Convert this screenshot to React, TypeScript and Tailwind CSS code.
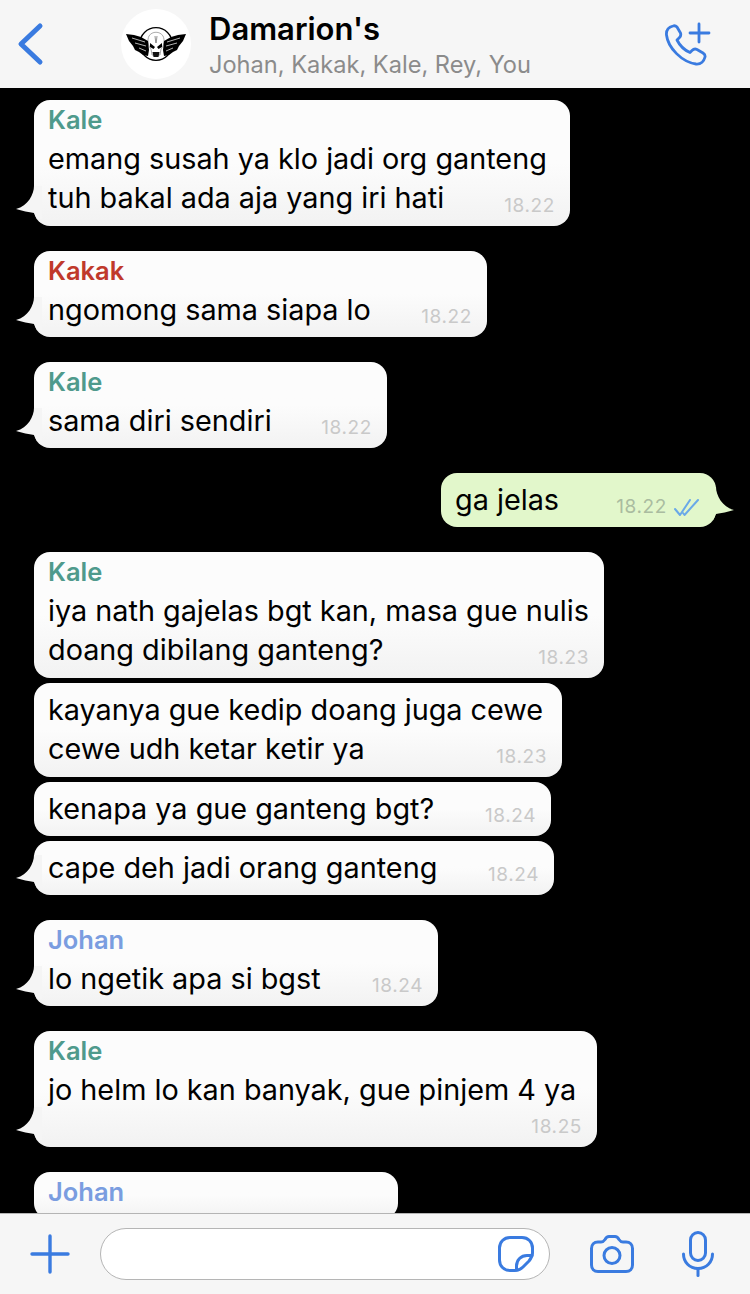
import React from 'react';

const BLUE = '#3a7be0';

type Msg = {
  name?: string;
  color?: string;
  lines: string[];
  time: string;
  width: string;
  tail?: boolean;
  gap: string;
  pad: string;
};

const messages: Msg[] = [
  { name: 'Kale', color: 'text-[#4f9a8c]', lines: ['emang susah ya klo jadi org ganteng', 'tuh bakal ada aja yang iri hati'], time: '18.22', width: 'w-[536px]', tail: true, gap: 'mt-0', pad: 'pb-[9px]' },
  { name: 'Kakak', color: 'text-[#c0392b]', lines: ['ngomong sama siapa lo'], time: '18.22', width: 'w-[453px]', tail: true, gap: 'mt-[25px]', pad: 'pb-[8px]' },
  { name: 'Kale', color: 'text-[#4f9a8c]', lines: ['sama diri sendiri'], time: '18.22', width: 'w-[353px]', tail: true, gap: 'mt-[25px]', pad: 'pb-[8px]' },
];

const messagesAfter: Msg[] = [
  { name: 'Kale', color: 'text-[#4f9a8c]', lines: ['iya nath gajelas bgt kan, masa gue nulis', 'doang dibilang ganteng?'], time: '18.23', width: 'w-[570px]', gap: 'mt-[25px]', pad: 'pb-[9px]' },
  { lines: ['kayanya gue kedip doang juga cewe', 'cewe udh ketar ketir ya'], time: '18.23', width: 'w-[528px]', gap: 'mt-[5px]', pad: 'pb-[9px]' },
  { lines: ['kenapa ya gue ganteng bgt?'], time: '18.24', width: 'w-[517px]', gap: 'mt-[5px]', pad: 'pb-[8px]' },
  { lines: ['cape deh jadi orang ganteng'], time: '18.24', width: 'w-[520px]', tail: true, gap: 'mt-[5px]', pad: 'pb-[8px]' },
  { name: 'Johan', color: 'text-[#7a9de0]', lines: ['lo ngetik apa si bgst'], time: '18.24', width: 'w-[404px]', tail: true, gap: 'mt-[25px]', pad: 'pb-[8px]' },
  { name: 'Kale', color: 'text-[#4f9a8c]', lines: ['jo helm lo kan banyak, gue pinjem 4 ya'], time: '18.25', width: 'w-[563px]', tail: true, gap: 'mt-[25px]', pad: 'pb-[38px]' },
  { name: 'Johan', color: 'text-[#7a9de0]', lines: [''], time: '', width: 'w-[364px]', gap: 'mt-[25px]', pad: 'pb-[8px]' },
];

const Bubble: React.FC<{ msg: Msg }> = ({ msg }) => (
  <div className={`relative ml-[34px] shrink-0 rounded-[16px] bg-gradient-to-b from-[#fcfcfc] from-50% to-[#f2f2f2] px-[14px] pt-[7px] text-black ${msg.width} ${msg.gap} ${msg.pad}`}>
    {msg.tail && (
      <svg className="absolute -left-[18px] bottom-0 h-[40px] w-[26px]" viewBox="0 0 26 40" aria-hidden="true">
        <path d="M18 0 C18 8 12 20 0 23 C6 25 13 26 18 27 C19 29 20 31 21 33 L26 33 L26 0 Z" fill="#f5f5f5" />
      </svg>
    )}
    {msg.name && (
      <div className={`text-[25.5px] font-semibold leading-[26px] ${msg.color}`}>{msg.name}</div>
    )}
    {msg.name && <div className="h-[6px]" />}
    {msg.lines.map((line, i) => (
      <div key={i} className="whitespace-nowrap text-[28.8px] leading-[39px]">{line}</div>
    ))}
    {msg.time && (
      <span className="absolute bottom-[10px] right-[15px] text-[19px] leading-[20px] tracking-[0.6px] text-[#c9c9c9]">{msg.time}</span>
    )}
  </div>
);

const Logo = () => (
  <svg className="h-[36px] w-[60px]" viewBox="0 0 60 36" aria-hidden="true">
    <circle cx="30" cy="18" r="16.300" fill="#fff" stroke="#000" strokeWidth="1.300" />
    {/* skull */}
    <path d="M23 10 C26 5 34 5 37 10 C39 14 38 20 35 23 L34 29 L26 29 L25 23 C22 20 21 14 23 10 Z" fill="#fff" stroke="#888" strokeWidth="0.700" />
    <path d="M24 17 L29 21 L27.500 23 L24 21 Z M36 17 L31 21 L32.500 23 L36 21 Z" fill="#000" />
    <path d="M29 10 L29.800 17 M31 10 L30.200 17" stroke="#777" strokeWidth="0.800" />
    <path d="M26.500 26 L33.500 26 L32.500 31 L27.500 31 Z" fill="#111" />
    {/* wings */}
    <path d="M0 8 L8 9 L15 11 L22 15 L23 24 L22 30 L17 29 L13 26 L9 24 L7 20 L3 15 Z" fill="#000" />
    <path d="M60 8 L52 9 L45 11 L38 15 L37 24 L38 30 L43 29 L47 26 L51 24 L53 20 L57 15 Z" fill="#000" />
    <path d="M6 12 L19 16 M9 17 L20 20 M13 22 L20 25 M54 12 L41 16 M51 17 L40 20 M47 22 L40 25" stroke="#fff" strokeWidth="0.700" />
  </svg>
);

const App: React.FC = () => {
  return (
    <div className="flex h-[1294px] w-[750px] flex-col overflow-hidden bg-black font-['Inter',sans-serif]">
      {/* header */}
      <header className="flex h-[88px] shrink-0 items-center bg-[#f6f6f6]">
        <svg className="ml-[17px] h-[44px] w-[28px]" viewBox="0 0 28 44" fill="none" aria-hidden="true">
          <path d="M23 4 L4 22 L23 40" stroke={BLUE} strokeWidth="5" strokeLinecap="round" strokeLinejoin="round" />
        </svg>
        <div className="ml-[76px] flex h-[70px] w-[70px] shrink-0 items-center justify-center rounded-full bg-white">
          <Logo />
        </div>
        <div className="ml-[18px] flex-1 pt-[3px]">
          <div className="text-[31px] font-semibold leading-[36px] text-black">Damarion's</div>
          <div className="mt-[2px] text-[23.6px] leading-[32px] text-[#8b8b8b]">Johan, Kakak, Kale, Rey, You</div>
        </div>
        <svg className="mr-[39px] h-[44px] w-[46px]" viewBox="0 0 46 44" fill="none" stroke={BLUE} strokeWidth="2.800" strokeLinecap="round" strokeLinejoin="round" aria-hidden="true">
          <path d="M8 4 C4 5 1 8 1.500 13 C3 26 17 40 31 42 C36 42.500 39 39 40 35 C40.500 33 39.500 32 38 31 L32 27.500 C30 26.500 28.500 27 27 28.500 L25 30.500 C19 28 14.500 23 12 18 L14.500 15.500 C16 14 16 12.500 15.500 11 L12 5 C11 4 9.500 3.500 8 4 Z" />
          <path d="M34 2 V20 M25 11 H44" />
        </svg>
      </header>

      {/* messages */}
      <main className="flex min-h-0 flex-1 flex-col overflow-hidden pt-[12px]">
        {messages.map((m, i) => (
          <Bubble key={i} msg={m} />
        ))}

        <div className="relative mt-[25px] ml-[441px] w-[275px] shrink-0 rounded-[16px] bg-[#e2f7cb] px-[14px] pb-[8px] pt-[7px] text-black">
          <svg className="absolute -right-[18px] bottom-0 h-[40px] w-[26px]" viewBox="0 0 26 40" aria-hidden="true">
            <path d="M8 0 C8 8 14 20 26 23 C20 25 13 26 8 27 C7 29 6 31 5 33 L0 33 L0 0 Z" fill="#e2f7cb" />
          </svg>
          <div className="whitespace-nowrap text-[28.8px] leading-[39px]">ga jelas</div>
          <div className="absolute bottom-[10px] right-[17px] flex items-center gap-[7px]">
            <span className="text-[19px] leading-[20px] tracking-[0.6px] text-[#aabca0]">18.22</span>
            <svg className="h-[17px] w-[25px]" viewBox="0 0 25 17" fill="none" stroke="#6aa9e8" strokeWidth="2" strokeLinecap="round" strokeLinejoin="round" aria-hidden="true">
              <path d="M1 10 L6 16 L16 1" />
              <path d="M9 14 L10.500 16 L24 1" />
            </svg>
          </div>
        </div>

        {messagesAfter.map((m, i) => (
          <Bubble key={i} msg={m} />
        ))}
      </main>

      {/* input bar */}
      <footer className="flex h-[81px] shrink-0 items-center border-t border-[#b4b4b4] bg-[#f6f6f6]">
        <svg className="ml-[30px] h-[40px] w-[40px]" viewBox="0 0 40 40" fill="none" stroke={BLUE} strokeWidth="3.400" strokeLinecap="round" aria-hidden="true">
          <path d="M20 2 V38 M2 20 H38" />
        </svg>
        <div className="ml-[30px] flex h-[52px] w-[450px] items-center justify-end rounded-full border border-[#b5b5b5] bg-white pr-[15px]">
          <svg className="h-[36px] w-[36px]" viewBox="0 0 36 36" fill="none" stroke={BLUE} strokeWidth="3" strokeLinecap="round" strokeLinejoin="round" aria-hidden="true">
            <path d="M12 1.500 H24 C30 1.500 34.500 6 34.500 12 V17 C34.500 20 33 22.500 31 25 L25 31 C22.500 33.500 20 34.500 17 34.500 H12 C6 34.500 1.500 30 1.500 24 V12 C1.500 6 6 1.500 12 1.500 Z" />
            <path d="M18.500 34 V30 C18.500 24 23 19.500 29 19.500 H34" />
          </svg>
        </div>
        <svg className="ml-[40px] h-[38px] w-[44px]" viewBox="0 0 44 38" fill="none" stroke={BLUE} strokeWidth="3" strokeLinejoin="round" aria-hidden="true">
          <path d="M8 7 H11 C13 7 14 6 15 4.500 C16 2.500 17 1.500 19 1.500 H25 C27 1.500 28 2.500 29 4.500 C30 6 31 7 33 7 H36 C40 7 42.500 9.500 42.500 13.500 V30 C42.500 34 40 36.500 36 36.500 H8 C4 36.500 1.500 34 1.500 30 V13.500 C1.500 9.500 4 7 8 7 Z" />
          <circle cx="22" cy="20.500" r="8" />
        </svg>
        <svg className="ml-[48px] h-[46px] w-[32px]" viewBox="0 0 32 46" fill="none" stroke={BLUE} strokeWidth="3" strokeLinecap="round" aria-hidden="true">
          <rect x="8.500" y="1.500" width="15" height="28" rx="7.500" />
          <path d="M1.500 23 C1.500 31 7.500 37.500 16 37.500 C24.500 37.500 30.500 31 30.500 23" />
          <path d="M16 37.500 V44.500" />
        </svg>
      </footer>
    </div>
  );
};

export default App;
